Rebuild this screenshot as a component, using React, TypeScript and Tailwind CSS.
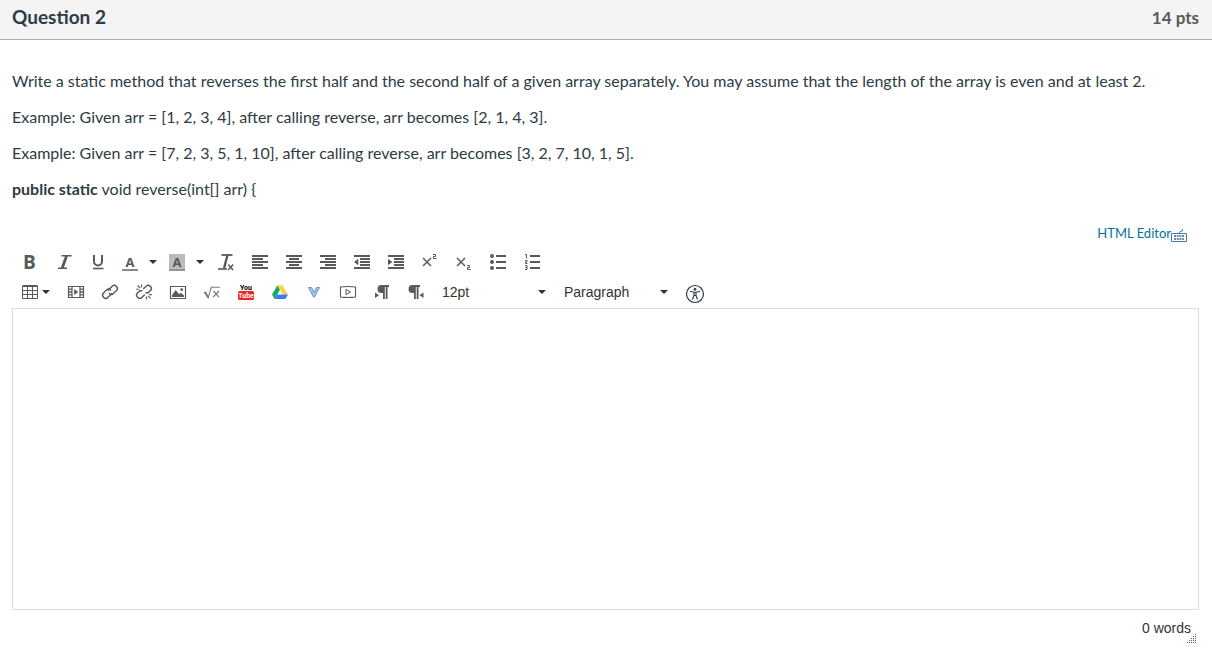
import type { ReactNode } from "react";

const INK = "#595959";

function Icon({ children }: { children: ReactNode }) {
  return (
    <svg viewBox="0 0 18 18" className="h-[18px] w-[18px] shrink-0 overflow-visible" fill="none" aria-hidden="true">
      {children}
    </svg>
  );
}

function Caret() {
  return (
    <svg viewBox="0 0 8 4" className="h-1 w-2 shrink-0" aria-hidden="true">
      <path d="M0 0h8L4 4z" fill="#333" />
    </svg>
  );
}

function ToolButton({ label, children }: { label: string; children: ReactNode }) {
  return (
    <button type="button" aria-label={label} className="flex h-[30px] w-[34px] items-center justify-center">
      {children}
    </button>
  );
}

function SplitButton({ label, children }: { label: string; children: ReactNode }) {
  return (
    <div className="flex h-[30px] w-[47px]">
      <button type="button" aria-label={label} className="flex w-[34px] items-center pl-1.5">
        {children}
      </button>
      <button type="button" aria-label={`${label} options`} className="flex w-[13px] items-center">
        <Caret />
      </button>
    </div>
  );
}

function ToolSelect({ label, options }: { label: string; options: string[] }) {
  return (
    <div className="grid h-[30px] w-[122px] items-center">
      <select
        aria-label={label}
        className="col-start-1 row-start-1 h-[30px] w-full appearance-none bg-transparent pl-[9px] text-sm text-[#333]"
      >
        {options.map((option) => (
          <option key={option}>{option}</option>
        ))}
      </select>
      <span className="pointer-events-none col-start-1 row-start-1 mr-[9px] justify-self-end">
        <Caret />
      </span>
    </div>
  );
}

const alignments = [
  { label: "Align left", d: "M1 3h16M1 6h11M1 9h16M1 12h11M1 15h16" },
  { label: "Align center", d: "M1 3h16M4 6h10M1 9h16M4 12h10M1 15h16" },
  { label: "Align right", d: "M1 3h16M6 6h11M1 9h16M6 12h11M1 15h16" },
];

function FormatRow() {
  return (
    <div className="flex flex-wrap">
      <ToolButton label="Bold">
        <Icon>
          <text x="2" y="16" fontSize="19" fontWeight="700" fill={INK} fontFamily="Open Sans, sans-serif">
            B
          </text>
        </Icon>
      </ToolButton>
      <ToolButton label="Italic">
        <Icon>
          <path d="M6.5 2.800h10M3 15.200h9" stroke={INK} strokeWidth="1.600" />
          <path d="M11.500 3 7.200 15" stroke={INK} strokeWidth="2.800" />
        </Icon>
      </ToolButton>
      <ToolButton label="Underline">
        <Icon>
          <path d="M5 2v6.5a4 4 0 0 0 8 0V2" stroke={INK} strokeWidth="2" />
          <path d="M4 15.5h10.5" stroke={INK} strokeWidth="1.6" />
        </Icon>
      </ToolButton>
      <SplitButton label="Text color">
        <Icon>
          <text x="9" y="14" textAnchor="middle" fontSize="13" fontWeight="700" fill={INK} fontFamily="Open Sans, sans-serif">
            A
          </text>
          <path d="M1 17h16" stroke="#8b8b8b" strokeWidth="2" />
        </Icon>
      </SplitButton>
      <SplitButton label="Background color">
        <Icon>
          <path d="M1 1h16v17H1z" fill="#bbb" />
          <text x="9" y="14" textAnchor="middle" fontSize="13" fontWeight="700" fill={INK} fontFamily="Open Sans, sans-serif">
            A
          </text>
          <path d="M1 17h16" stroke="#959595" strokeWidth="2" />
        </Icon>
      </SplitButton>
      <ToolButton label="Clear formatting">
        <Icon>
          <path d="M4.5 2h11" stroke={INK} strokeWidth="1.8" />
          <path d="M10.5 2 7 15.5" stroke={INK} strokeWidth="2.4" />
          <path d="M1 16h9" stroke={INK} strokeWidth="1.6" />
          <path d="m11.3 11.5 4.8 5.5M16.1 11.5 11.3 17" stroke={INK} strokeWidth="1.5" />
        </Icon>
      </ToolButton>
      {alignments.map((item) => (
        <ToolButton key={item.label} label={item.label}>
          <Icon>
            <path d={item.d} stroke={INK} strokeWidth="2" />
          </Icon>
        </ToolButton>
      ))}
      <ToolButton label="Decrease indent">
        <Icon>
          <path d="M1 3h16M7 6h10M7 9h10M7 12h10M1 15h16" stroke={INK} strokeWidth="2" />
          <path d="M5.3 5.7v6.6L1 9z" fill={INK} />
        </Icon>
      </ToolButton>
      <ToolButton label="Increase indent">
        <Icon>
          <path d="M1 3h16M7 6h10M7 9h10M7 12h10M1 15h16" stroke={INK} strokeWidth="2" />
          <path d="M1 5.7v6.6L5.3 9z" fill={INK} />
        </Icon>
      </ToolButton>
      <ToolButton label="Superscript">
        <Icon>
          <path d="m2 5 8 8M10 5l-8 8" stroke={INK} strokeWidth="1.5" />
          <path d="M12 1.500h2.500v2h-2v2h3" stroke={INK} strokeWidth="1" />
        </Icon>
      </ToolButton>
      <ToolButton label="Subscript">
        <Icon>
          <path d="m2 5 8 8M10 5l-8 8" stroke={INK} strokeWidth="1.5" />
          <path d="M12 12.500h2.500v2h-2v2h3" stroke={INK} strokeWidth="1" />
        </Icon>
      </ToolButton>
      <ToolButton label="Bullet list">
        <Icon>
          <path d="M7 3h10M7 9h10M7 15h10" stroke={INK} strokeWidth="2" />
          <circle cx="3" cy="3" r="2" fill={INK} />
          <circle cx="3" cy="9" r="2" fill={INK} />
          <circle cx="3" cy="15" r="2" fill={INK} />
        </Icon>
      </ToolButton>
      <ToolButton label="Numbered list">
        <Icon>
          <path d="M7 3h10M7 9h10M7 15h10" stroke={INK} strokeWidth="2" />
          <path
            d="M2 1.500h1.500v4M2 7.500h2v1.500h-1.500v1.500h2M2 12.500h2v4H2M2.500 14.500h1.500"
            stroke={INK}
            strokeWidth="1"
          />
        </Icon>
      </ToolButton>
    </div>
  );
}

function InsertRow() {
  return (
    <div className="flex flex-wrap">
      <button type="button" aria-label="Table" className="flex h-[30px] w-[46px] items-center gap-[3px] pl-2">
        <Icon>
          <path d="M1.500 3h15" stroke={INK} strokeWidth="2" />
          <path d="M1.500 3.500h15v12h-15zM1.500 7.500h15M1.500 11.500h15M6.500 3.500v12M11.500 3.500v12" stroke={INK} />
        </Icon>
        <Caret />
      </button>
      <ToolButton label="Insert video">
        <Icon>
          <path d="M1.5 3.5h15v11h-15zM5 3.5v11M13 3.5v11" stroke={INK} strokeWidth="1.2" />
          <path d="M1 6.2h4M1 9h4M1 11.8h4M13 6.2h4M13 9h4M13 11.8h4" stroke={INK} strokeWidth="1.3" />
          <path d="M7.2 6v6l4-3z" fill={INK} />
        </Icon>
      </ToolButton>
      <ToolButton label="Insert link">
        <Icon>
          <g stroke={INK} strokeWidth="1.4" strokeLinecap="round">
            <path d="m7.2 7.2 4-4a2.9 2.9 0 0 1 4.1 0l.2.2a2.9 2.9 0 0 1 0 4.1l-3 3a2.9 2.9 0 0 1-4.1 0" />
            <path d="m10.8 10.4-4 4a2.9 2.9 0 0 1-4.1 0l-.2-.2a2.9 2.9 0 0 1 0-4.1l3-3a2.9 2.9 0 0 1 4.1 0" />
          </g>
        </Icon>
      </ToolButton>
      <ToolButton label="Remove link">
        <Icon>
          <g stroke={INK} strokeWidth="1.4" strokeLinecap="round">
            <path d="m8.6 5.6 2.6-2.4a2.9 2.9 0 0 1 4.1 0l.2.2a2.9 2.9 0 0 1 0 4.1l-2.3 2.3H11" />
            <path d="m9.4 12-2.6 2.4a2.9 2.9 0 0 1-4.1 0l-.2-.2a2.9 2.9 0 0 1 0-4.1l2.3-2.3H7" />
          </g>
          <path
            d="M6.5 1.5v3M2.5 2.5 5 5M1.2 6.3h2.6M11.5 13.5v3M13 12.8l2.6 2.6M14.2 11.6h2.6"
            stroke={INK}
            strokeWidth="1.1"
          />
        </Icon>
      </ToolButton>
      <ToolButton label="Insert image">
        <Icon>
          <path d="M1.5 3.5h15v12h-15z" stroke={INK} strokeWidth="1.2" />
          <path d="M3 14v-1.8l3.6-5.1 3.6 4.2 1.7-1.5 3.1 2.8V14z" fill={INK} />
          <circle cx="12.7" cy="6.7" r="1.4" fill={INK} />
        </Icon>
      </ToolButton>
      <ToolButton label="Insert math equation">
        <Icon>
          <path d="m.8 10 1.8-.8L5.3 14.5 8.3 4.2h8.5" stroke="#777" strokeWidth="1.1" />
          <path d="m1.8 9.2 3.3 5.3" stroke="#777" strokeWidth="1.6" />
          <path d="m10.5 8 5.5 6.2M16 8l-6 6.2" stroke="#777" strokeWidth="1.2" />
        </Icon>
      </ToolButton>
      <ToolButton label="YouTube">
        <Icon>
          <rect x="1" y="8" width="16" height="9" rx="1.5" fill="#f5221b" />
          <text x="9" y="7" textAnchor="middle" fontSize="7" fontWeight="700" fill="#000" fontFamily="Roboto, sans-serif">
            You
          </text>
          <text x="9" y="15" textAnchor="middle" fontSize="7" fontWeight="700" fill="#fff" fontFamily="Roboto, sans-serif">
            Tube
          </text>
        </Icon>
      </ToolButton>
      <ToolButton label="Google Drive">
        <Icon>
          <path d="M6.4 2.2 1 11.4 3.6 16 9 6.8z" fill="#1fa463" />
          <path d="M6.4 2.2h5.2L17 11.4h-5.2z" fill="#ffd04b" />
          <path d="M3.6 16h10.8l2.6-4.6H6.3z" fill="#3b7ded" />
        </Icon>
      </ToolButton>
      <ToolButton label="Insert variable">
        <Icon>
          <path d="M3.500 4.500H6.500l2.500 5 2.500-5h3L9.500 14h-1z" fill="#a9c4ee" stroke="#6f8fc4" strokeLinejoin="round" />
        </Icon>
      </ToolButton>
      <ToolButton label="Embed media">
        <Icon>
          <path d="M1.5 4Q9 3 16.5 4v10Q9 15 1.5 14z" stroke={INK} strokeWidth="1.1" />
          <path d="M7 6.3v5.4L11.5 9z" stroke={INK} />
        </Icon>
      </ToolButton>
      <ToolButton label="Left to right">
        <Icon>
          <path d="M10 10H8.500a4 4 0 0 1 0-8H16v2h-1.500v12h-1.800V4H11.800v12H10z" fill={INK} />
          <path d="M2 9.500v5.500l4-2.700z" fill={INK} />
        </Icon>
      </ToolButton>
      <ToolButton label="Right to left">
        <Icon>
          <path d="M7 10H5.500a4 4 0 0 1 0-8H13v2h-1.500v12H9.700V4H8.800v12H7z" fill={INK} />
          <path d="M16.500 9.500v5.500l-4-2.700z" fill={INK} />
        </Icon>
      </ToolButton>
      <ToolSelect label="Font size" options={["12pt", "8pt", "10pt", "14pt", "18pt", "24pt", "36pt"]} />
      <ToolSelect label="Block format" options={["Paragraph", "Heading 2", "Heading 3", "Heading 4", "Preformatted"]} />
      <button type="button" aria-label="Check accessibility" className="flex h-[34px] w-9 items-center justify-center">
        <svg viewBox="0 0 20 20" className="h-5 w-5" fill="none" aria-hidden="true">
          <circle cx="10" cy="10" r="8.5" stroke="#2d3b45" strokeWidth="1.2" />
          <circle cx="10" cy="5.3" r="1.4" fill="#2d3b45" />
          <path d="M5 7.3 9 8.3h2l4-1M9 8.3v3.2L7.5 15.5M11 8.3v3.2l1.5 4M9 11.500h2" stroke="#2d3b45" strokeWidth="1.1" />
        </svg>
      </button>
    </div>
  );
}

export default function App() {
  return (
    <div className="bg-white font-[Lato,sans-serif] text-base text-[#2d3b45] [text-rendering:optimizeLegibility]">
      <header className="flex h-10 items-center justify-between border-b border-[#aaa] bg-[#f4f4f4] pr-[13px] pb-1 pl-3">
        <h1 className="text-[19px] font-bold">Question 2</h1>
        <span className="text-[17px] font-bold text-[#595959]">14 pts</span>
      </header>

      <main className="pt-[29px] pr-[13px] pl-3">
        <div className="space-y-3">
          <p>
            Write a static method that reverses the first half and the second half of a given array separately. You may
            assume that the length of the array is even and at least 2.
          </p>
          <p>Example: Given arr = [1, 2, 3, 4], after calling reverse, arr becomes [2, 1, 4, 3].</p>
          <p>Example: Given arr = [7, 2, 3, 5, 1, 10], after calling reverse, arr becomes [3, 2, 7, 10, 1, 5].</p>
          <p>
            <strong>public static</strong> void reverse(int[] arr) {"{"}
          </p>
        </div>

        <div className="mt-[23px] flex h-5 items-center justify-end pr-3">
          <a href="#html-editor" className="text-[13px] text-[#0770a3]">
            HTML Editor
          </a>
          <button type="button" aria-label="Keyboard shortcuts" className="pt-0.5">
            <svg viewBox="0 0 16 15" className="h-[15px] w-4" fill="none" aria-hidden="true">
              <path d="M.5 5.500h15v8H.500zM8 5.500q0-2 2-2t1.500-2.500" stroke="#3d7fb0" />
              <path d="M3 8h10M3 11h10" stroke="#3a5f80" strokeWidth="1.600" strokeDasharray="2 .7" />
            </svg>
          </button>
        </div>

        <section className="mt-[3px] font-['Liberation_Sans',sans-serif]">
          <div role="toolbar" aria-label="Formatting" className="h-[61px] pl-px">
            <FormatRow />
            <InsertRow />
          </div>
          <textarea
            aria-label="Answer"
            className="block h-[302px] w-full resize-none border border-[#ddd] p-2 outline-none"
          />
          <div className="flex justify-end pt-2 pr-0.5 text-sm text-[#333]">
            <span>0 words</span>
            <svg viewBox="0 0 10 10" className="mt-4 -ml-1 h-2.5 w-2.5" aria-hidden="true">
              <path
                d="M8 0h1v1H8zM8 2h1v1H8zM6 2h1v1H6zM8 4h1v1H8zM6 4h1v1H6zM4 4h1v1H4zM8 6h1v1H8zM6 6h1v1H6zM4 6h1v1H4zM2 6h1v1H2zM8 8h1v1H8zM6 8h1v1H6zM4 8h1v1H4zM2 8h1v1H2zM0 8h1v1H0z"
                fill="#4a6a4a"
              />
            </svg>
          </div>
        </section>
      </main>
    </div>
  );
}
